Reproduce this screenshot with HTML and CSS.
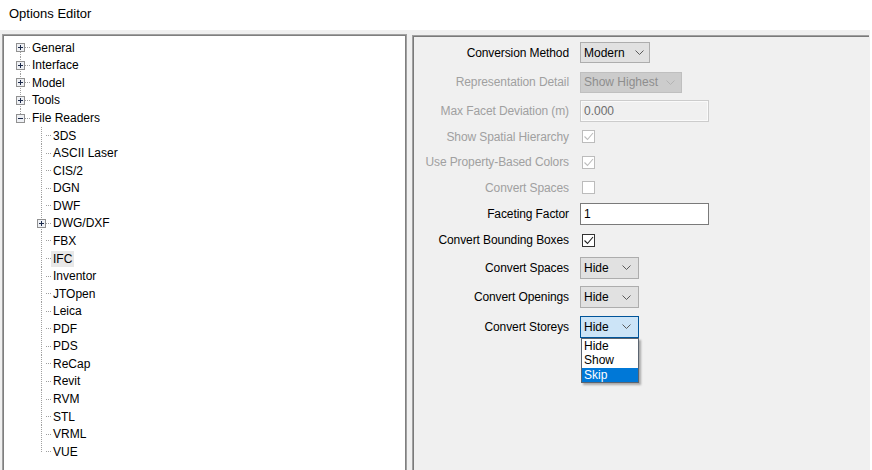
FILE: index.html
```html
<!DOCTYPE html>
<html>
  <head>
    <meta charset="utf-8" />
    <title>Options Editor</title>
    <link rel="stylesheet" href="styles.css">
  </head>
  <body>
    <div class="titlebar">Options Editor</div>
    <div class="workspace">
      <div class="tree-pane">
        <ul class="tree">
          <li class="node first">
            <span class="twist"><svg width="9" height="9"><rect x="0.5" y="0.5" width="8" height="8" fill="#eef0f4" stroke="#919191"/><path d="M2 4.5h5M4.5 2v5" stroke="#1c2a4a"/></svg></span><span class="hline"></span><span class="label">General</span>
          </li>
          <li class="node">
            <span class="twist"><svg width="9" height="9"><rect x="0.5" y="0.5" width="8" height="8" fill="#eef0f4" stroke="#919191"/><path d="M2 4.5h5M4.5 2v5" stroke="#1c2a4a"/></svg></span><span class="hline"></span><span class="label">Interface</span>
          </li>
          <li class="node">
            <span class="twist"><svg width="9" height="9"><rect x="0.5" y="0.5" width="8" height="8" fill="#eef0f4" stroke="#919191"/><path d="M2 4.5h5M4.5 2v5" stroke="#1c2a4a"/></svg></span><span class="hline"></span><span class="label">Model</span>
          </li>
          <li class="node">
            <span class="twist"><svg width="9" height="9"><rect x="0.5" y="0.5" width="8" height="8" fill="#eef0f4" stroke="#919191"/><path d="M2 4.5h5M4.5 2v5" stroke="#1c2a4a"/></svg></span><span class="hline"></span><span class="label">Tools</span>
          </li>
          <li class="node last">
            <span class="twist"><svg width="9" height="9"><rect x="0.5" y="0.5" width="8" height="8" fill="#eef0f4" stroke="#919191"/><path d="M2 4.5h5" stroke="#1c2a4a"/></svg></span><span class="hline"></span><span class="label">File Readers</span>
          </li>
          <li class="node child"><span class="twist"></span><span class="hline"></span><span class="label">3DS</span></li>
          <li class="node child"><span class="twist"></span><span class="hline"></span><span class="label">ASCII Laser</span></li>
          <li class="node child"><span class="twist"></span><span class="hline"></span><span class="label">CIS/2</span></li>
          <li class="node child"><span class="twist"></span><span class="hline"></span><span class="label">DGN</span></li>
          <li class="node child"><span class="twist"></span><span class="hline"></span><span class="label">DWF</span></li>
          <li class="node child">
            <span class="twist"><svg width="9" height="9"><rect x="0.5" y="0.5" width="8" height="8" fill="#eef0f4" stroke="#919191"/><path d="M2 4.5h5M4.5 2v5" stroke="#1c2a4a"/></svg></span><span class="hline"></span><span class="label">DWG/DXF</span>
          </li>
          <li class="node child"><span class="twist"></span><span class="hline"></span><span class="label">FBX</span></li>
          <li class="node child"><span class="twist"></span><span class="hline"></span><span class="label selected">IFC</span></li>
          <li class="node child"><span class="twist"></span><span class="hline"></span><span class="label">Inventor</span></li>
          <li class="node child"><span class="twist"></span><span class="hline"></span><span class="label">JTOpen</span></li>
          <li class="node child"><span class="twist"></span><span class="hline"></span><span class="label">Leica</span></li>
          <li class="node child"><span class="twist"></span><span class="hline"></span><span class="label">PDF</span></li>
          <li class="node child"><span class="twist"></span><span class="hline"></span><span class="label">PDS</span></li>
          <li class="node child"><span class="twist"></span><span class="hline"></span><span class="label">ReCap</span></li>
          <li class="node child"><span class="twist"></span><span class="hline"></span><span class="label">Revit</span></li>
          <li class="node child"><span class="twist"></span><span class="hline"></span><span class="label">RVM</span></li>
          <li class="node child"><span class="twist"></span><span class="hline"></span><span class="label">STL</span></li>
          <li class="node child"><span class="twist"></span><span class="hline"></span><span class="label">VRML</span></li>
          <li class="node child last"><span class="twist"></span><span class="hline"></span><span class="label">VUE</span></li>
        </ul>
      </div>

      <div class="props-pane">
        <div class="row sel">
          <span class="caption">Conversion Method</span>
          <div class="combo w70"><span>Modern</span><svg class="chev" width="9" height="5"><path d="M0.5 0.5l4 4 4-4" fill="none" stroke="#5a5a5a"/></svg></div>
        </div>
        <div class="row sel off">
          <span class="caption">Representation Detail</span>
          <div class="combo w102 disabled"><span>Show Highest</span><svg class="chev" width="9" height="5"><path d="M0.5 0.5l4 4 4-4" fill="none" stroke="#b4b4b4"/></svg></div>
        </div>
        <div class="row txt off">
          <span class="caption">Max Facet Deviation (m)</span>
          <div class="textbox disabled">0.000</div>
        </div>
        <div class="row chk off">
          <span class="caption">Show Spatial Hierarchy</span>
          <span class="check disabled"><svg width="11" height="11"><path d="M1.5 5.5l3 3 5.5-6.5" fill="none" stroke="#bcbcbc" stroke-width="1.1"/></svg></span>
        </div>
        <div class="row chk off">
          <span class="caption">Use Property-Based Colors</span>
          <span class="check disabled"><svg width="11" height="11"><path d="M1.5 5.5l3 3 5.5-6.5" fill="none" stroke="#bcbcbc" stroke-width="1.1"/></svg></span>
        </div>
        <div class="row chk off">
          <span class="caption">Convert Spaces</span>
          <span class="check disabled"></span>
        </div>
        <div class="row txt">
          <span class="caption">Faceting Factor</span>
          <div class="textbox">1</div>
        </div>
        <div class="row chk">
          <span class="caption">Convert Bounding Boxes</span>
          <span class="check"><svg width="11" height="11"><path d="M1.5 5.5l3 3 5.5-6.5" fill="none" stroke="#222" stroke-width="1.1"/></svg></span>
        </div>
        <div class="row sel">
          <span class="caption">Convert Spaces</span>
          <div class="combo w59"><span>Hide</span><svg class="chev" width="9" height="5"><path d="M0.5 0.5l4 4 4-4" fill="none" stroke="#5a5a5a"/></svg></div>
        </div>
        <div class="row sel">
          <span class="caption">Convert Openings</span>
          <div class="combo w59"><span>Hide</span><svg class="chev" width="9" height="5"><path d="M0.5 0.5l4 4 4-4" fill="none" stroke="#5a5a5a"/></svg></div>
        </div>
        <div class="row sel">
          <span class="caption">Convert Storeys</span>
          <div class="combo w59 focused">
            <span>Hide</span><svg class="chev" width="9" height="5"><path d="M0.5 0.5l4 4 4-4" fill="none" stroke="#5a5a5a"/></svg>
            <ul class="dropdown">
              <li>Hide</li>
              <li>Show</li>
              <li class="hot">Skip</li>
            </ul>
          </div>
        </div>
      </div>
    </div>
  </body>
</html>
```

FILE: styles.css
```css
body {
  margin: 0;
  background: #fff;
  font-family: "Liberation Sans", Arial, sans-serif;
  font-size: 12px;
  color: #000;
}
.titlebar {
  height: 30px;
  line-height: 28px;
  padding-left: 9px;
  font-size: 13px;
}
.workspace {
  display: flex;
  gap: 5px;
  width: 870px;
  height: 440px;
  padding: 4px 0 0 2px;
  box-sizing: border-box;
  background: #f0f0f0;
  overflow: hidden;
}

/* tree */
.tree-pane {
  flex: none;
  width: 405px;
  height: 460px;
  box-sizing: border-box;
  background: #fff;
  border: 1px solid #a0a0a0;
  box-shadow: inset 0 0 0 1px #7f7f7f;
  padding: 1px;
}
.tree {
  list-style: none;
  margin: 0;
  padding: 3px 0 0 0;
}
.node {
  display: flex;
  align-items: center;
  height: 17.57px;
  padding-left: 12px;
}
.node.child {
  padding-left: 33px;
}
.twist {
  flex: none;
  display: flex;
  align-items: center;
  width: 9px;
  align-self: stretch;
  background-image: repeating-linear-gradient(to bottom, #a0a0a0 0 1px, transparent 1px 2px);
  background-size: 1px 100%;
  background-position: 4px 0;
  background-repeat: no-repeat;
}
.twist svg {
  display: block;
}
.node.first .twist {
  background-size: 1px 50%;
  background-position: 4px 100%;
}
.node.last .twist {
  background-size: 1px 50%;
  background-position: 4px 0;
}
.hline {
  flex: none;
  width: 5px;
  align-self: stretch;
  background-image: repeating-linear-gradient(to right, #a0a0a0 0 1px, transparent 1px 2px);
  background-size: 100% 1px;
  background-position: 0 50%;
  background-repeat: no-repeat;
}
.label {
  padding: 1px 2px;
  line-height: 14px;
  white-space: nowrap;
}
.label.selected {
  background: #e8e8e8;
}

/* properties */
.props-pane {
  flex: none;
  width: 457px;
  height: 460px;
  margin-top: 1px;
  box-sizing: border-box;
  border-top: 1px solid #a0a0a0;
  border-left: 1px solid #a0a0a0;
  box-shadow: inset 1px 1px 0 #7a7a7a;
  padding: 2px 0 0 1px;
}
.row {
  display: flex;
  align-items: center;
}
.row.sel { height: 29.5px; }
.row.txt { height: 27px; }
.row.chk { height: 25.5px; }
.caption {
  flex: none;
  width: 155px;
  margin-right: 11px;
  text-align: right;
  white-space: nowrap;
  letter-spacing: -0.1px;
}
.row.off .caption {
  color: #a0a0a0;
}
.combo {
  position: relative;
  display: flex;
  align-items: center;
  justify-content: space-between;
  height: 22px;
  box-sizing: border-box;
  padding: 0 6px 0 3px;
  border: 1px solid #adadad;
  background: #e1e1e1;
}
.combo .chev {
  display: block;
  flex: none;
}
.combo.w70 { width: 70px; height: 21px; padding-right: 5px; }
.combo.w102 { width: 102px; height: 21px; padding-right: 6px; }
.combo.w59 { width: 59px; padding-right: 7px; }
.combo.disabled {
  background: #cccccc;
  border-color: #bfbfbf;
  color: #8e8e8e;
}
.combo.focused {
  background: #cce4f7;
  border-color: #005499;
}
.dropdown {
  position: absolute;
  top: 100%;
  left: 0;
  width: 58px;
  box-sizing: border-box;
  margin: 1px 0 0 0;
  padding: 0;
  list-style: none;
  background: #fff;
  border: 1px solid #5a6470;
  box-shadow: 2px 2px 2px rgba(0, 0, 0, 0.3);
}
.dropdown li {
  height: 14.5px;
  line-height: 14.5px;
  padding-left: 2px;
}
.dropdown li.hot {
  background: #0078d7;
  color: #fff;
}
.textbox {
  display: flex;
  align-items: center;
  width: 129px;
  height: 22px;
  box-sizing: border-box;
  padding-left: 3px;
  border: 1px solid #7a7a7a;
  background: #fff;
}
.textbox.disabled {
  border-color: #cccccc;
  box-shadow: inset 0 0 0 1px #fafafa;
  background: #f0f0f0;
  color: #6d6d6d;
}
.check {
  display: flex;
  align-items: center;
  justify-content: center;
  width: 13px;
  height: 13px;
  margin-left: 2px;
  box-sizing: border-box;
  border: 1px solid #333;
  background: #fff;
}
.check.disabled {
  border-color: #bcbcbc;
}
.check svg {
  display: block;
}
```
